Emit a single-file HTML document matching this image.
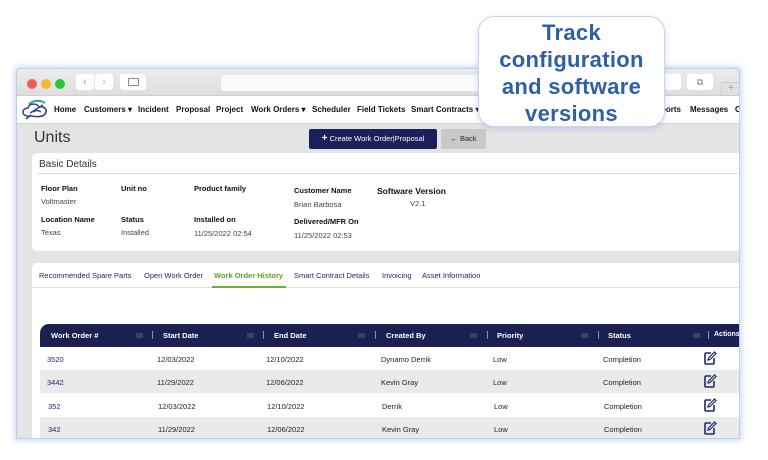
<!DOCTYPE html>
<html><head><meta charset="utf-8"><style>
*{margin:0;padding:0;box-sizing:border-box}
body{width:768px;height:460px;background:#fff;position:relative;overflow:hidden;font-family:"Liberation Sans",sans-serif;color:#222}
.a{position:absolute}
.win{left:16px;top:68px;width:724px;height:371px;border:1px solid #b9cdf0;box-shadow:0 0 6px 2px rgba(150,180,230,.45);background:#e4e4e4;overflow:hidden;border-radius:4px 4px 0 0}
.tb{left:0;top:0;width:724px;height:27px;background:linear-gradient(#ececec,#dedede);border-bottom:1px solid #cfcfcf}
.dot{width:10px;height:10px;border-radius:50%;top:10px}
.nav{left:0;top:27px;width:724px;height:28px;background:#fff;border-bottom:1px solid #d6d6d6;font-size:8px;font-weight:bold;color:#111}
.nav span{position:absolute;top:9px}
.panel{background:#fff;border-radius:5px}
.lbl{font-size:7.5px;font-weight:bold;color:#111}
.val{font-size:7.5px;color:#444}
.th{font-size:7.5px;font-weight:bold;color:#fff;top:7px}
.sq{top:9px;width:7px;height:5px;background:#3a3f6e}
.bar{top:7px;width:1px;height:8px;background:#8a8fb0}
.row{left:23px;width:705px;height:23px;font-size:7.5px;color:#222}
.row span{position:absolute;top:8px}
.row svg{position:absolute;left:663px;top:4px}
.callout{left:478px;top:16px;width:187px;height:111px;background:#fff;border:1.5px solid #c5d5f0;border-radius:16px;box-shadow:0 2px 6px rgba(120,150,200,.35);text-align:center;color:#2f5fa8;font-weight:bold;font-size:22px;line-height:27px;padding-top:2px;letter-spacing:.3px}
</style></head><body>
<div class="a win">
 <div class="a tb">
  <div class="a dot" style="left:10px;background:#f25c54"></div>
  <div class="a dot" style="left:24px;background:#f5b82e"></div>
  <div class="a dot" style="left:38px;background:#27c840"></div>
  <div class="a" style="left:59px;top:5px;width:18px;height:16px;background:#fff;border-radius:3px;color:#999;font-size:11px;text-align:center;line-height:16px">‹</div>
  <div class="a" style="left:78px;top:5px;width:18px;height:16px;background:#fff;border-radius:3px;color:#bbb;font-size:11px;text-align:center;line-height:16px">›</div>
  <div class="a" style="left:103px;top:5px;width:26px;height:16px;background:#fff;border-radius:3px"><div class="a" style="left:8px;top:4px;width:11px;height:8px;border:1px solid #888;border-radius:1px"></div></div>
  <div class="a" style="left:204px;top:6px;width:440px;height:16px;background:#fafafa;border-radius:4px"></div>
  <div class="a" style="left:640px;top:5px;width:24px;height:16px;background:#fff;border-radius:3px"></div>
  <div class="a" style="left:670px;top:5px;width:26px;height:16px;background:#fff;border-radius:3px;font-size:9px;text-align:center;color:#777;line-height:16px">⧉</div>
  <div class="a" style="left:704px;top:13px;width:20px;height:14px;background:#e0e0e0;border:1px solid #ccc;font-size:10px;color:#999;text-align:center;line-height:12px">+</div>
 </div>
 <div class="a nav">
  <svg class="a" style="left:4px;top:2px" width="32" height="24" viewBox="0 0 32 24"><path d="M8 6 Q16 0 24 5" stroke="#2aa198" stroke-width="2" fill="none"/><path d="M6 18 C0 17 1 10 7 10 C8 5 16 5 18 9 C24 8 27 12 24 16 C22 19 16 19 10 18 Z" stroke="#33458a" stroke-width="1.6" fill="none"/><path d="M9 15 L22 7 M12 14 Q16 11 20 14" stroke="#33458a" stroke-width="1.4" fill="none"/><path d="M5 21 L10 17" stroke="#33458a" stroke-width="1.6"/></svg>
  <span style="left:37px">Home</span><span style="left:67px">Customers ▾</span><span style="left:121px">Incident</span><span style="left:159px">Proposal</span><span style="left:199px">Project</span><span style="left:234px">Work Orders ▾</span><span style="left:295px">Scheduler</span><span style="left:340px">Field Tickets</span><span style="left:394px">Smart Contracts ▾</span><span style="left:644px">ports</span><span style="left:673px">Messages</span><span style="left:718px">C</span>
 </div>
 <div class="a" style="left:17px;top:60px;font-size:16px;color:#333">Units</div>
 <div class="a" style="left:292px;top:60px;width:128px;height:20px;background:#1b1f5a;border-radius:2px;color:#fff;font-size:7.5px;text-align:center;line-height:20px"><b style="font-size:10px">+</b> Create Work Order|Proposal</div>
 <div class="a" style="left:424px;top:60px;width:45px;height:20px;background:#c9c9c9;border-radius:2px;color:#222;font-size:7.5px;text-align:center;line-height:20px">← Back</div>
 <div class="a panel" style="left:15px;top:84px;width:712px;height:98px">
  <div class="a" style="left:7px;top:6px;font-size:10px;color:#333">Basic Details</div>
  <div class="a" style="left:6px;top:20px;width:706px;height:1px;background:#ddd"></div>
  <div class="a lbl" style="left:9px;top:31px">Floor Plan</div><div class="a val" style="left:9px;top:44px">Voltmaster</div>
  <div class="a lbl" style="left:89px;top:31px">Unit no</div>
  <div class="a lbl" style="left:162px;top:31px">Product family</div>
  <div class="a lbl" style="left:262px;top:33px">Customer Name</div><div class="a val" style="left:262px;top:47px">Brian Barbosa</div>
  <div class="a lbl" style="left:345px;top:33px;font-size:8.5px">Software Version</div><div class="a val" style="left:378px;top:46px">V2.1</div>
  <div class="a lbl" style="left:9px;top:62px">Location Name</div><div class="a val" style="left:9px;top:75px">Texas</div>
  <div class="a lbl" style="left:89px;top:62px">Status</div><div class="a val" style="left:89px;top:75px">Installed</div>
  <div class="a lbl" style="left:162px;top:62px">Installed on</div><div class="a val" style="left:162px;top:76px">11/25/2022 02:54</div>
  <div class="a lbl" style="left:262px;top:64px">Delivered/MFR On</div><div class="a val" style="left:262px;top:78px">11/25/2022 02:53</div>
 </div>
 <div class="a panel" style="left:15px;top:194px;width:712px;height:200px">
  <div class="a" style="left:0;top:24px;width:712px;height:1px;background:#ddd"></div>
  <div class="a" style="left:7px;top:8px;font-size:7.5px;color:#1d2a6a">Recommended Spare Parts</div>
  <div class="a" style="left:112px;top:8px;font-size:7.5px;color:#1d2a6a">Open Work Order</div>
  <div class="a" style="left:182px;top:8px;font-size:7.5px;color:#5fa31f;font-weight:bold">Work Order History</div>
  <div class="a" style="left:180px;top:23px;width:74px;height:2px;background:#6cb32a"></div>
  <div class="a" style="left:262px;top:8px;font-size:7.5px;color:#1d2a6a">Smart Contract Details</div>
  <div class="a" style="left:350px;top:8px;font-size:7.5px;color:#1d2a6a">Invoicing</div>
  <div class="a" style="left:390px;top:8px;font-size:7.5px;color:#1d2a6a">Asset Information</div>
 </div>
 <div class="a" style="left:23px;top:255px;width:705px;height:23px;background:#1b1f52;border-radius:9px 0 0 0">
  <span class="a th" style="left:11px">Work Order #</span>
  <div class="a sq" style="left:96px"></div><div class="a bar" style="left:112px"></div><span class="a th" style="left:123px">Start Date</span>
  <div class="a sq" style="left:207px"></div><div class="a bar" style="left:223px"></div><span class="a th" style="left:234px">End Date</span>
  <div class="a sq" style="left:318px"></div><div class="a bar" style="left:335px"></div><span class="a th" style="left:346px">Created By</span>
  <div class="a sq" style="left:430px"></div><div class="a bar" style="left:447px"></div><span class="a th" style="left:457px">Priority</span>
  <div class="a sq" style="left:541px"></div><div class="a bar" style="left:558px"></div><span class="a th" style="left:568px">Status</span>
  <div class="a sq" style="left:653px"></div><div class="a bar" style="left:668px"></div><span class="a th" style="left:674px;font-size:7px">Actions</span>
 </div>
 <div class="a row" style="top:278px;background:#fff"><span style="left:7px;color:#1d2a6a">3520</span><span style="left:117px">12/03/2022</span><span style="left:226px">12/10/2022</span><span style="left:341px">Dynamo Derrik</span><span style="left:453px">Low</span><span style="left:563px">Completion</span><svg width="14" height="14" viewBox="0 0 14 14"><path d="M8 2 H3 Q2 2 2 3 V12 Q2 13 3 13 H10 Q11 13 11 12 V7" stroke="#1d2a6a" stroke-width="1.6" fill="none"/><path d="M5 9 L5.5 7 L11.5 1 L13 2.5 L7 8.5 Z" stroke="#1d2a6a" stroke-width="1.2" fill="none"/></svg></div>
 <div class="a row" style="top:301px;background:#eaeaea"><span style="left:7px;color:#1d2a6a">3442</span><span style="left:117px">11/29/2022</span><span style="left:226px">12/06/2022</span><span style="left:341px">Kevin Gray</span><span style="left:453px">Low</span><span style="left:563px">Completion</span><svg width="14" height="14" viewBox="0 0 14 14"><path d="M8 2 H3 Q2 2 2 3 V12 Q2 13 3 13 H10 Q11 13 11 12 V7" stroke="#1d2a6a" stroke-width="1.6" fill="none"/><path d="M5 9 L5.5 7 L11.5 1 L13 2.5 L7 8.5 Z" stroke="#1d2a6a" stroke-width="1.2" fill="none"/></svg></div>
 <div class="a row" style="top:325px;background:#fff"><span style="left:8px;color:#1d2a6a">352</span><span style="left:118px">12/03/2022</span><span style="left:227px">12/10/2022</span><span style="left:342px">Derrik</span><span style="left:454px">Low</span><span style="left:564px">Completion</span><svg width="14" height="14" viewBox="0 0 14 14"><path d="M8 2 H3 Q2 2 2 3 V12 Q2 13 3 13 H10 Q11 13 11 12 V7" stroke="#1d2a6a" stroke-width="1.6" fill="none"/><path d="M5 9 L5.5 7 L11.5 1 L13 2.5 L7 8.5 Z" stroke="#1d2a6a" stroke-width="1.2" fill="none"/></svg></div>
 <div class="a row" style="top:348px;background:#eaeaea"><span style="left:8px;color:#1d2a6a">342</span><span style="left:118px">11/29/2022</span><span style="left:227px">12/06/2022</span><span style="left:342px">Kevin Gray</span><span style="left:454px">Low</span><span style="left:564px">Completion</span><svg width="14" height="14" viewBox="0 0 14 14"><path d="M8 2 H3 Q2 2 2 3 V12 Q2 13 3 13 H10 Q11 13 11 12 V7" stroke="#1d2a6a" stroke-width="1.6" fill="none"/><path d="M5 9 L5.5 7 L11.5 1 L13 2.5 L7 8.5 Z" stroke="#1d2a6a" stroke-width="1.2" fill="none"/></svg></div>
</div>
<div class="a callout">Track<br>configuration<br>and software<br>versions</div>
</body></html>
